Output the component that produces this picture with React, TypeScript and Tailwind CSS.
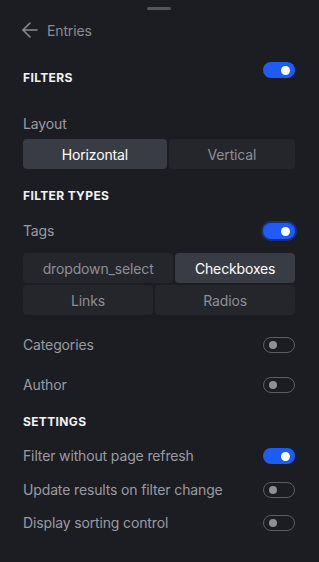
import { ArrowLeft } from 'lucide-react';

function Toggle({ on, focused }: { on?: boolean; focused?: boolean }) {
    return (
        <div className={`rounded-full ${focused ? 'p-[2px] bg-[#1b2f78]' : ''}`}>
            <div
                className={`relative w-8 h-4 rounded-full ${on ? 'bg-[#1d5cf6]' : 'border border-[#5c5d64]'}`}
            >
                {on ? (
                    <span className="absolute right-[5px] top-[3.5px] w-[9px] h-[9px] rounded-full bg-white" />
                ) : (
                    <span className="absolute left-[5px] top-[3px] w-2 h-2 rounded-full bg-[#8e8f96]" />
                )}
            </div>
        </div>
    );
}

function Segment({ label, active }: { label: string; active?: boolean }) {
    return (
        <button
            className={`flex-auto h-[30px] px-4 rounded-[4px] text-[14px] tracking-[-0.01em] ${active ? 'bg-[#393c44] text-white' : 'bg-[#25262c] text-[#8d8e95]'}`}
        >
            {label}
        </button>
    );
}

function Row({ label, on, className = '' }: { label: string; on?: boolean; className?: string }) {
    return (
        <div className={`flex items-center justify-between h-5 ${className}`}>
            <span className="text-[14px] leading-5 tracking-[-0.01em] text-[#9a9ba2]">{label}</span>
            <Toggle on={on} />
        </div>
    );
}

export default function App() {
    return (
        <div
            className="w-full h-[562px] bg-[#1c1d23] pl-[23px] pr-[24px] overflow-hidden"
            style={{ fontFamily: 'Inter, "Noto Sans", sans-serif' }}
        >
            <div className="pt-[7px] flex justify-center">
                <div className="w-6 h-[3px] rounded-full bg-[#55565d]" />
            </div>

            <div className="mt-[10px] flex items-center h-5 text-[#8a8b91]">
                <ArrowLeft size={24} strokeWidth={1.6} className="-ml-[5px]" />
                <span className="ml-[5px] text-[14px] tracking-[-0.01em]">Entries</span>
            </div>

            <div className="mt-[22px] flex justify-between items-start">
                <h3 className="pt-2 text-[12px] leading-4 font-bold tracking-[0.03em] text-[#f2f2f4]">FILTERS</h3>
                <Toggle on />
            </div>

            <div className="mt-[28px] text-[14px] leading-5 tracking-[-0.01em] text-[#9a9ba2]">Layout</div>
            <div className="mt-[5px] flex gap-[2px]">
                <Segment label="Horizontal" active />
                <Segment label="Vertical" />
            </div>

            <h3 className="mt-[19px] text-[12px] leading-4 font-bold tracking-[0.03em] text-[#f2f2f4]">FILTER TYPES</h3>

            <div className="mt-4 flex items-center justify-between h-[22px]">
                <span className="text-[14px] leading-5 tracking-[-0.01em] text-[#9a9ba2]">Tags</span>
                <div className="-mr-[2px]">
                    <Toggle on focused />
                </div>
            </div>

            <div className="mt-[11px] flex flex-wrap gap-[2px]">
                <Segment label="dropdown_select" />
                <Segment label="Checkboxes" active />
                <Segment label="Links" />
                <Segment label="Radios" />
            </div>

            <Row label="Categories" className="mt-5" />
            <Row label="Author" className="mt-5" />

            <h3 className="mt-[19px] text-[12px] leading-4 font-bold tracking-[0.03em] text-[#f2f2f4]">SETTINGS</h3>

            <Row label="Filter without page refresh" on className="mt-4" />
            <Row label="Update results on filter change" className="mt-[14px]" />
            <Row label="Display sorting control" className="mt-[13px]" />
        </div>
    );
}
